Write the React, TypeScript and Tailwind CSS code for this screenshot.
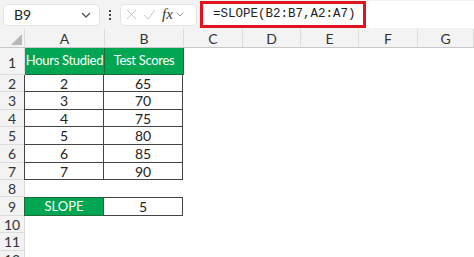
import React from "react";

const cols = [
  { label: "A", w: "w-[80px]" },
  { label: "B", w: "w-[79px]" },
  { label: "C", w: "w-[59px]" },
  { label: "D", w: "w-[58px]" },
  { label: "E", w: "w-[58px]" },
  { label: "F", w: "w-[59px]" },
  { label: "G", w: "w-[56px]" },
];

const data: [string, string][] = [
  ["2", "65"],
  ["3", "70"],
  ["4", "75"],
  ["5", "80"],
  ["6", "85"],
  ["7", "90"],
];

const rowHeights = ["h-[17px]", "h-[18px]", "h-[17px]", "h-[18px]", "h-[18px]", "h-[17px]"];

const RowNum = ({ n, h }: { n: number; h: string }) => (
  <div className={`w-[25px] ${h} shrink-0 bg-[#f3f3f3] border-r border-b border-[#dcdcdc] flex items-center justify-center text-[14px] text-[#333]`}>
    {n}
  </div>
);

export default function App() {
  return (
    <div className="w-[474px] h-[257px] overflow-hidden bg-white text-[#222]" style={{ fontFamily: 'Lato, "Open Sans", sans-serif' }}>
      {/* formula bar */}
      <div className="h-[29px] bg-[#f3f3f3] flex items-center">
        <div className="ml-[3px] w-[97px] h-[22px] bg-white rounded-[4px] border border-[#e4e4e4] flex items-center justify-between pl-[10px] pr-[8px] text-[14px] text-[#222]">
          <span>B9</span>
          <svg width="10" height="6" viewBox="0 0 10 6"><path d="M1 1l4 4 4-4" fill="none" stroke="#555" strokeWidth="1.3" /></svg>
        </div>
        <div className="w-[20px] flex flex-col items-center gap-[2px]">
          <span className="w-[2px] h-[2px] bg-[#444]" />
          <span className="w-[2px] h-[2px] bg-[#444]" />
          <span className="w-[2px] h-[2px] bg-[#444]" />
        </div>
        <div className="w-[77px] h-[22px] bg-white rounded-[4px] border border-[#e4e4e4] flex items-center gap-[6px] pl-[5px]">
          <svg width="11" height="11" viewBox="0 0 11 11"><path d="M1 1l9 9M10 1l-9 9" stroke="#c4c4c4" strokeWidth="1" /></svg>
          <svg width="13" height="11" viewBox="0 0 13 11"><path d="M1 6l4 4 7-9" fill="none" stroke="#c4c4c4" strokeWidth="1" /></svg>
          <span className="italic text-[15px] text-[#333] leading-none" style={{ fontFamily: '"Liberation Serif", serif' }}>fx</span>
          <svg width="8" height="5" viewBox="0 0 8 5" className="-ml-[3px]"><path d="M0.5 0.5l3.5 3.5 3.5-3.5" fill="none" stroke="#999" strokeWidth="1" /></svg>
        </div>
        <div className="ml-[3px] flex-1 h-[27px] bg-white flex items-center">
          <div className="w-[166px] h-[27px] border-[3px] border-[#e0141e] flex items-center pl-[10px] text-[12.5px] text-[#222]" style={{ fontFamily: '"Liberation Mono", monospace' }}>
            =SLOPE(B2:B7,A2:A7)
          </div>
        </div>
      </div>

      {/* column headers */}
      <div className="flex h-[19px] bg-[#f3f3f3] border-b border-[#c8c8c8]">
        <div className="w-[25px] shrink-0 border-r border-[#dcdcdc] flex items-end justify-end p-[2px]">
          <svg width="11" height="11" viewBox="0 0 11 11"><path d="M11 0v11H0z" fill="#b8b8b8" /></svg>
        </div>
        {cols.map((c) => (
          <div key={c.label} className={`${c.w} shrink-0 border-r border-[#dcdcdc] flex items-center justify-center text-[14px] text-[#333]`}>
            {c.label}
          </div>
        ))}
      </div>

      {/* row 1 */}
      <div className="flex h-[27px]">
        <div className="w-[25px] shrink-0 bg-[#f3f3f3] border-r border-b border-[#dcdcdc] flex items-end justify-center pb-[1px] text-[14px] text-[#333]">1</div>
        <div className="w-[80px] shrink-0 bg-[#00a651] border-r border-b border-[#1f6b3c] flex items-center justify-center whitespace-nowrap tracking-[-0.3px] text-[13px] text-white">Hours Studied</div>
        <div className="w-[79px] shrink-0 bg-[#00a651] border-r border-b border-[#1f6b3c] flex items-center justify-center whitespace-nowrap tracking-[-0.3px] text-[13px] text-white">Test Scores</div>
      </div>

      {data.map(([a, b], i) => (
        <div key={i} className="flex">
          <RowNum n={i + 2} h={rowHeights[i]} />
          <div className={`w-[80px] ${rowHeights[i]} shrink-0 border-l border-r border-b border-[#444] flex items-center justify-center text-[14px] -ml-px`}>{a}</div>
          <div className={`w-[79px] ${rowHeights[i]} shrink-0 border-r border-b border-[#444] flex items-center justify-center text-[14px]`}>{b}</div>
        </div>
      ))}

      <div className="flex">
        <RowNum n={8} h="h-[17px]" />
      </div>

      <div className="flex">
        <RowNum n={9} h="h-[19px]" />
        <div className="w-[80px] h-[19px] shrink-0 -ml-px bg-[#00a651] border border-[#1f6b3c] flex items-center justify-center text-[13px] text-white">SLOPE</div>
        <div className="w-[79px] h-[19px] shrink-0 border-t border-r border-b border-[#444] flex items-center justify-center text-[14px]">5</div>
      </div>

      <div className="flex">
        <RowNum n={10} h="h-[17px]" />
      </div>
      <div className="flex">
        <RowNum n={11} h="h-[18px]" />
      </div>
      <div className="flex">
        <RowNum n={12} h="h-[18px]" />
      </div>
    </div>
  );
}
